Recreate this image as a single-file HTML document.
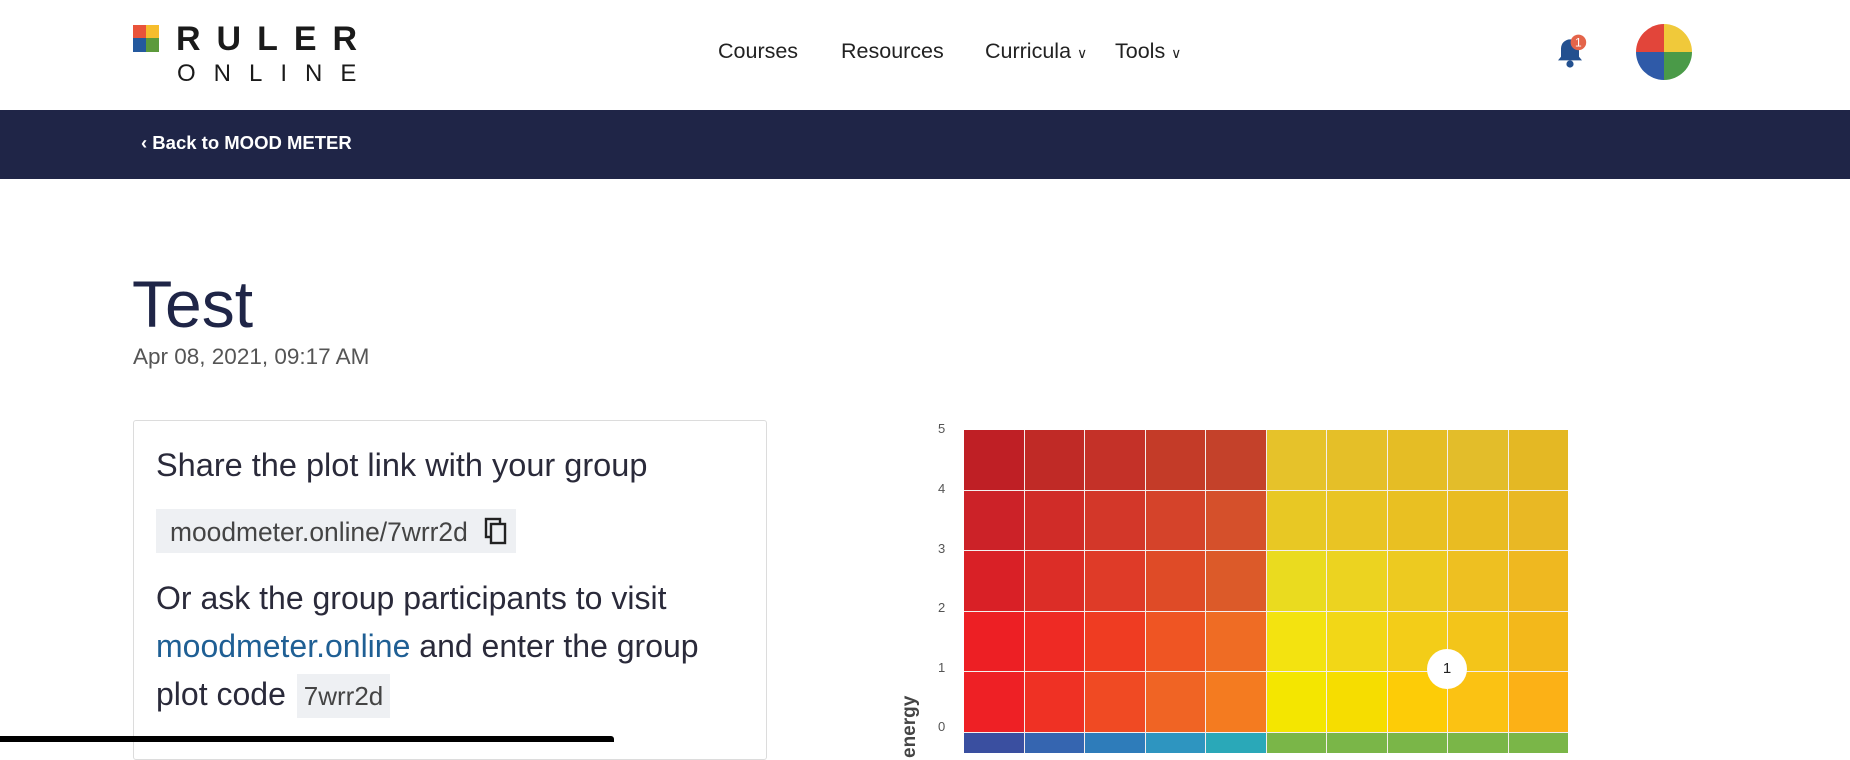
<!DOCTYPE html>
<html><head><meta charset="utf-8"><style>
*{margin:0;padding:0;box-sizing:border-box}
body{width:1850px;height:742px;overflow:hidden;background:#fff;font-family:"Liberation Sans",sans-serif;position:relative;color:#1f2547}
.a{position:absolute;white-space:nowrap}
.nav{font-size:21.5px;color:#222;top:39px}
.grid{position:absolute;left:964px;top:430px;width:604px;display:grid;grid-template-columns:repeat(10,1fr);grid-template-rows:repeat(5,59.6px) 20px;gap:1px;background:#f4eeee}
.yl{position:absolute;left:938px;font-size:13px;color:#555}
</style></head><body>
<div class="a" style="left:133px;top:25px;width:13px;height:13px;background:#e9533a"></div>
<div class="a" style="left:146px;top:25px;width:13px;height:13px;background:#f6bd2c"></div>
<div class="a" style="left:133px;top:38px;width:13px;height:14px;background:#24599e"></div>
<div class="a" style="left:146px;top:38px;width:13px;height:14px;background:#5c9a3b"></div>
<div class="a" style="left:176px;top:20px;font-size:34px;font-weight:900;letter-spacing:16px;color:#1a1a1a">RULER</div>
<div class="a" style="left:177px;top:60px;font-size:24px;letter-spacing:18px;color:#1a1a1a">ONLINE</div>
<div class="a nav" style="left:718px">Courses</div>
<div class="a nav" style="left:841px">Resources</div>
<div class="a nav" style="left:985px">Curricula <span style="font-size:14px">&#x2228;</span></div>
<div class="a nav" style="left:1115px">Tools <span style="font-size:14px">&#x2228;</span></div>
<svg class="a" style="left:1552px;top:34px" width="36" height="36" viewBox="0 0 28 30"><path d="M4 22 L6.5 19 V12 A7.5 7.5 0 0 1 21.5 12 V19 L24 22 Z" fill="#23508f"/><circle cx="14" cy="25" r="3" fill="#23508f"/><circle cx="21" cy="7" r="6.5" fill="#e4644a"/><text x="21" y="10.5" font-size="10" fill="#fff" text-anchor="middle" font-family="Liberation Sans">1</text></svg>
<svg class="a" style="left:1636px;top:24px" width="56" height="56" viewBox="0 0 56 56"><path d="M28 28 L28 0 A28 28 0 0 1 56 28Z" fill="#f0c93a"/><path d="M28 28 L56 28 A28 28 0 0 1 28 56Z" fill="#4a9a48"/><path d="M28 28 L28 56 A28 28 0 0 1 0 28Z" fill="#2f5aa8"/><path d="M28 28 L0 28 A28 28 0 0 1 28 0Z" fill="#e2453a"/></svg>
<div class="a" style="left:0;top:110px;width:1850px;height:69px;background:#1f2547"></div>
<div class="a" style="left:141px;top:132px;font-size:18.5px;font-weight:bold;color:#fff">&#x2039; Back to MOOD METER</div>
<div class="a" style="left:132px;top:266px;font-size:66px;color:#1f2547">Test</div>
<div class="a" style="left:133px;top:344px;font-size:22.5px;color:#555">Apr 08, 2021, 09:17 AM</div>
<div class="a" style="left:133px;top:420px;width:634px;height:340px;border:1px solid #dcdcdc;border-radius:3px"></div>
<div class="a" style="left:156px;top:447px;font-size:32.5px;color:#2a2a3a">Share the plot link with your group</div>
<div class="a" style="left:156px;top:509px;width:360px;height:44px;background:#eef0f3"></div>
<div class="a" style="left:170px;top:517px;font-size:26.4px;color:#444">moodmeter.online/7wrr2d</div>
<svg class="a" style="left:484px;top:517px" width="24" height="28" viewBox="0 0 24 28"><rect x="2" y="2" width="14" height="18" fill="none" stroke="#222" stroke-width="2.4"/><rect x="7" y="7" width="14" height="19" fill="#eef0f3" stroke="#222" stroke-width="2.4"/></svg>
<div class="a" style="left:156px;top:574px;font-size:32px;color:#2a2a3a;line-height:48px;white-space:normal;width:620px">Or ask the group participants to visit<br><span style="color:#1f5f94">moodmeter.online</span> and enter the group<br>plot code <span style="display:inline-block;background:#eef0f3;padding:0 7px;font-size:26px;line-height:44px;color:#444;margin-left:2px">7wrr2d</span></div>
<div class="a" style="left:0;top:736px;width:614px;height:6px;background:#000;border-radius:0 3px 0 0"></div>
<div class="grid">
<div style="background:#bf1f25"></div><div style="background:#c02a26"></div><div style="background:#c43128"></div><div style="background:#c43b28"></div><div style="background:#c4412a"></div><div style="background:#e6c22a"></div><div style="background:#e5bf28"></div><div style="background:#e5bd25"></div><div style="background:#e3bd2a"></div><div style="background:#e4b824"></div>
<div style="background:#cc2228"></div><div style="background:#d02c28"></div><div style="background:#d33729"></div><div style="background:#d5432a"></div><div style="background:#d5502b"></div><div style="background:#e8c824"></div><div style="background:#e9c424"></div><div style="background:#e9c022"></div><div style="background:#e9bc22"></div><div style="background:#e9b824"></div>
<div style="background:#d92026"></div><div style="background:#dc2d27"></div><div style="background:#df3b28"></div><div style="background:#df4b27"></div><div style="background:#dc5a29"></div><div style="background:#eadb1f"></div><div style="background:#ecd320"></div><div style="background:#edca20"></div><div style="background:#eec021"></div><div style="background:#efb820"></div>
<div style="background:#ed1f24"></div><div style="background:#ee2a24"></div><div style="background:#ef3c22"></div><div style="background:#ef5523"></div><div style="background:#ef6c24"></div><div style="background:#f3e310"></div><div style="background:#f2d717"></div><div style="background:#f3cd18"></div><div style="background:#f3c51a"></div><div style="background:#f3b81b"></div>
<div style="background:#ee2025"></div><div style="background:#ef3124"></div><div style="background:#f04a23"></div><div style="background:#f06424"></div><div style="background:#f47b20"></div><div style="background:#f4e600"></div><div style="background:#f6dd00"></div><div style="background:#fdcc07"></div><div style="background:#fbc213"></div><div style="background:#fcb116"></div>
<div style="background:#3a4fa0"></div><div style="background:#3565b0"></div><div style="background:#2e7cba"></div><div style="background:#2e95c0"></div><div style="background:#2aa8b8"></div><div style="background:#7ab648"></div><div style="background:#7ab648"></div><div style="background:#7ab648"></div><div style="background:#7ab648"></div><div style="background:#7ab648"></div>
</div>
<div class="a" style="left:1427px;top:649px;width:40px;height:40px;border-radius:50%;background:#fff;font-size:15px;color:#222;text-align:center;line-height:40px">1</div>
<div class="yl" style="top:421px">5</div>
<div class="yl" style="top:481px">4</div>
<div class="yl" style="top:541px">3</div>
<div class="yl" style="top:600px">2</div>
<div class="yl" style="top:660px">1</div>
<div class="yl" style="top:719px">0</div>
<div class="a" style="left:899px;top:758px;font-size:19px;font-weight:bold;color:#444;transform:rotate(-90deg);transform-origin:left top">energy</div>
</body></html>
